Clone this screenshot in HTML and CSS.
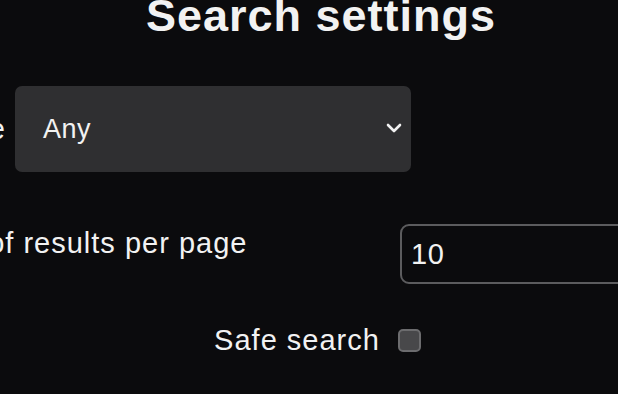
FILE: index.html
```html
<!DOCTYPE html>
<html>
<head>
<meta charset="utf-8">
<link rel="stylesheet" href="styles.css">
</head>
<body>
<main class="page">
  <h1 class="title">Search settings</h1>
  <div class="row row-time">
    <label class="label label-time">Time range</label>
    <div class="select">
      <span class="select-value">Any</span>
      <svg class="chevron" width="16" height="10" viewBox="0 0 16 10"><path d="M2 2 L8 8 L14 2" fill="none" stroke="#f2f2f2" stroke-width="2.6" stroke-linecap="round" stroke-linejoin="round"/></svg>
    </div>
  </div>
  <div class="row row-count">
    <label class="label label-count">Number of results per page</label>
    <div class="number-input">10</div>
  </div>
  <div class="row row-safe">
    <span class="label">Safe search</span>
    <span class="checkbox"></span>
  </div>
</main>
</body>
</html>
```
FILE: styles.css
```css
html, body {
  margin: 0;
  padding: 0;
  background: #0b0b0d;
  overflow: hidden;
}
body {
  width: 618px;
  height: 394px;
  font-family: "Liberation Sans", Arial, sans-serif;
  color: #f2f2f2;
}
.page {
  display: flex;
  flex-direction: column;
}
.title {
  margin: -7px 0 0;
  padding-left: 24px;
  text-align: center;
  font-size: 45px;
  line-height: 46px;
  font-weight: bold;
  letter-spacing: 1px;
  white-space: nowrap;
}
.row {
  display: flex;
  align-items: center;
}
.label {
  font-size: 29px;
  line-height: 34px;
  letter-spacing: 1px;
  white-space: nowrap;
}
.row-time {
  margin-top: 47px;
  margin-left: -160px;
  gap: 9px;
}
.label-time {
  width: 166px;
  flex: none;
  text-align: right;
}
.select {
  flex: none;
  width: 396px;
  height: 86px;
  box-sizing: border-box;
  background: #2f2f31;
  border-radius: 7px;
  display: flex;
  align-items: center;
  justify-content: space-between;
  padding: 0 9px 0 28px;
}
.select-value {
  font-size: 27px;
  letter-spacing: 0.5px;
}
.chevron {
  display: block;
  margin-top: -2px;
}
.row-count {
  margin-top: 52px;
  margin-left: -130px;
  align-items: flex-start;
}
.label-count {
  width: 530px;
  flex: none;
  margin-top: 2px;
  text-align: right;
  padding-right: 155px;
  box-sizing: border-box;
}
.number-input {
  flex: none;
  width: 300px;
  height: 60px;
  box-sizing: border-box;
  border: 2px solid #5c5c5e;
  border-radius: 9px;
  padding-left: 9px;
  display: flex;
  align-items: center;
  font-size: 29px;
  letter-spacing: 0.5px;
}
.row-safe {
  margin-top: 39px;
  justify-content: center;
  padding-left: 17px;
  gap: 18px;
}
.checkbox {
  width: 23px;
  height: 23px;
  box-sizing: border-box;
  background: #48484a;
  border: 2px solid #6c6c6e;
  border-radius: 5px;
}
```
